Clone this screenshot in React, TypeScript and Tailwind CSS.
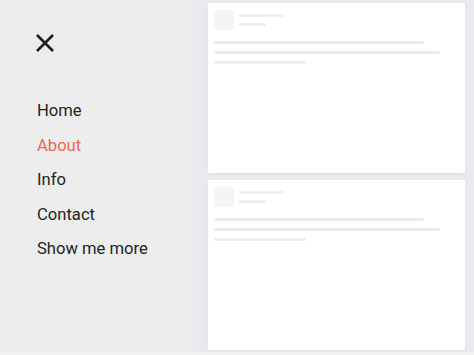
import React from "react";

function Card() {
  return (
    <div className="h-[170px] bg-white shadow-[0_1px_2px_rgba(0,0,0,0.06)] pt-[7px] pl-[6px]">
      <div className="flex gap-[5px]">
        <div className="w-[20px] h-[20px] bg-[#f4f5f7] rounded-[2px]" />
        <div className="flex flex-col pt-[4px] gap-[6px]">
          <div className="w-[45px] h-[3px] bg-[#f0f0f2] rounded-full" />
          <div className="w-[27px] h-[3px] bg-[#ededf0] rounded-full" />
        </div>
      </div>
      <div className="flex flex-col gap-[7px] mt-[11px]">
        <div className="w-[210px] h-[3px] bg-[#ebebed] rounded-full" />
        <div className="w-[226px] h-[3px] bg-[#ebebed] rounded-full" />
        <div className="w-[92px] h-[3px] bg-[#ededef] rounded-full" />
      </div>
    </div>
  );
}

export default function App() {
  const items = ["Home", "About", "Info", "Contact", "Show me more"];
  return (
    <div className="w-[474px] h-[355px] bg-[#f2f2f4] overflow-hidden" style={{ fontFamily: "Roboto, 'Liberation Sans', sans-serif" }}>
      <div className="flex h-[352px]">
        <div className="w-[193px] bg-[#ededed] pl-[37px] pt-[33px]">
          <svg width="20" height="20" viewBox="0 0 20 20" className="-ml-[2px]">
            <path d="M2 2 L18 18 M18 2 L2 18" stroke="#1e1e1e" strokeWidth="2.6" strokeLinecap="butt" />
          </svg>
          <div className="flex flex-col mt-[47px] gap-[13.5px]">
            {items.map((t) => (
              <div
                key={t}
                className={`text-[16.6px] leading-[21px] ${t === "About" ? "text-[#ea6a54]" : "text-[#242424]"}`}
              >
                {t}
              </div>
            ))}
          </div>
        </div>
        <div className="flex-1 bg-[#e9eaee] pl-[15px] pr-[9px] pt-[3px] flex flex-col gap-[7px]">
          <Card />
          <Card />
        </div>
      </div>
    </div>
  );
}
